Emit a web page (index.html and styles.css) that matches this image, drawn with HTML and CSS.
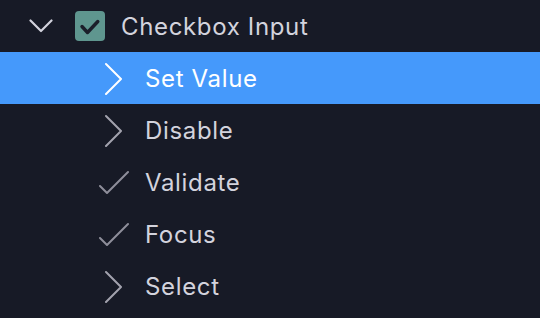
FILE: index.html
```html
<!DOCTYPE html>
<html>
<head>
<meta charset="utf-8">
<link rel="stylesheet" href="styles.css">
</head>
<body>
<div class="tree">
  <div class="row parent">
    <span class="toggle">
      <svg width="24" height="14" viewBox="0 0 24 14"><path d="M1.5 1.5 L12 12 L22.5 1.5" fill="none" stroke="#d2d2dc" stroke-width="2.2" stroke-linecap="round" stroke-linejoin="round"/></svg>
    </span>
    <span class="checkbox">
      <svg width="30" height="30" viewBox="0 0 30 30"><path d="M7 15.5 L12.5 21.5 L22.8 10.5" fill="none" stroke="#1b1e2a" stroke-width="3.4" stroke-linecap="round" stroke-linejoin="round"/></svg>
    </span>
    <span class="label">Checkbox Input</span>
  </div>
  <div class="row child selected">
    <span class="icon">
      <svg width="32" height="34" viewBox="0 0 32 34"><path d="M9 3 L24 18 L9 33" fill="none" stroke="#ffffff" stroke-width="2" stroke-linecap="round" stroke-linejoin="round"/></svg>
    </span>
    <span class="label">Set Value</span>
  </div>
  <div class="row child">
    <span class="icon">
      <svg width="32" height="34" viewBox="0 0 32 34"><path d="M9 3 L24 18 L9 33" fill="none" stroke="#a2a2ad" stroke-width="2" stroke-linecap="round" stroke-linejoin="round"/></svg>
    </span>
    <span class="label">Disable</span>
  </div>
  <div class="row child">
    <span class="icon">
      <svg width="32" height="34" viewBox="0 0 32 34"><path d="M3 21 L10 28 L31 7" fill="none" stroke="#8e8e9a" stroke-width="2" stroke-linecap="round" stroke-linejoin="round"/></svg>
    </span>
    <span class="label">Validate</span>
  </div>
  <div class="row child">
    <span class="icon">
      <svg width="32" height="34" viewBox="0 0 32 34"><path d="M3 21 L10 28 L31 7" fill="none" stroke="#8e8e9a" stroke-width="2" stroke-linecap="round" stroke-linejoin="round"/></svg>
    </span>
    <span class="label">Focus</span>
  </div>
  <div class="row child">
    <span class="icon">
      <svg width="32" height="34" viewBox="0 0 32 34"><path d="M9 3 L24 18 L9 33" fill="none" stroke="#a2a2ad" stroke-width="2" stroke-linecap="round" stroke-linejoin="round"/></svg>
    </span>
    <span class="label">Select</span>
  </div>
</div>
</body>
</html>
```
FILE: styles.css
```css
html, body {
  margin: 0;
  padding: 0;
  background: #171a26;
}
body {
  width: 540px;
  height: 318px;
  overflow: hidden;
  font-family: Inter, "Noto Sans", sans-serif;
}
.tree {
  display: flex;
  flex-direction: column;
}
.row {
  height: 52px;
  display: flex;
  align-items: center;
  color: #d3d3dd;
  font-size: 24px;
  letter-spacing: 0.65px;
}
.row.parent {
  padding-left: 29px;
}
.toggle {
  display: flex;
  width: 24px;
  height: 14px;
  margin-right: 22px;
}
.checkbox {
  width: 30px;
  height: 30px;
  border-radius: 4px;
  background: #5f968f;
  display: flex;
  margin-right: 16px;
}
.row.child {
  padding-left: 97px;
}
.icon {
  display: flex;
  width: 32px;
  height: 34px;
  margin-right: 16px;
}
.row.selected {
  background: #4599fb;
  color: #ffffff;
}
```
